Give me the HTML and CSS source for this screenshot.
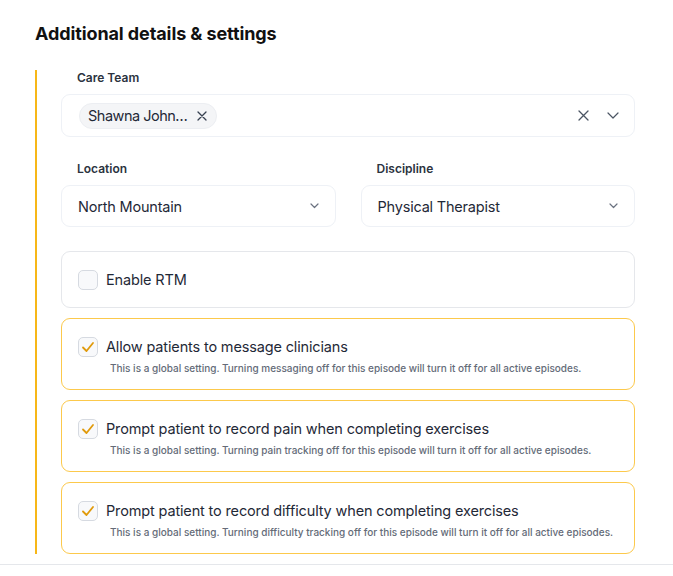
FILE: index.html
```html
<!DOCTYPE html>
<html>
<head>
<meta charset="utf-8">
<link rel="stylesheet" href="styles.css">
</head>
<body>
<div class="page">
  <h2 class="title">Additional details &amp; settings</h2>
  <div class="section">
    <div class="field">
      <label class="label">Care Team</label>
      <div class="multi">
        <span class="chip">Shawna John…
          <svg class="chip-x" width="10" height="10" viewBox="0 0 10 10"><path d="M1 1L9 9M9 1L1 9" stroke="#374151" stroke-width="1.3" stroke-linecap="round"/></svg>
        </span>
        <span class="spacer"></span>
        <svg class="clear" width="11" height="11" viewBox="0 0 11 11"><path d="M1 1L10 10M10 1L1 10" stroke="#4b5563" stroke-width="1.3" stroke-linecap="round"/></svg>
        <svg class="chev" width="12" height="7" viewBox="0 0 12 7"><path d="M1 1L6 6L11 1" fill="none" stroke="#4b5563" stroke-width="1.2" stroke-linecap="round" stroke-linejoin="round"/></svg>
      </div>
    </div>
    <div class="row">
      <div class="field">
        <label class="label">Location</label>
        <div class="select">
          <span class="value">North Mountain</span>
          <svg class="chev-sm" width="9" height="6" viewBox="0 0 9 6"><path d="M1 1L4.5 4.5L8 1" fill="none" stroke="#6b7280" stroke-width="1.2" stroke-linecap="round" stroke-linejoin="round"/></svg>
        </div>
      </div>
      <div class="field">
        <label class="label">Discipline</label>
        <div class="select">
          <span class="value">Physical Therapist</span>
          <svg class="chev-sm" width="9" height="6" viewBox="0 0 9 6"><path d="M1 1L4.5 4.5L8 1" fill="none" stroke="#6b7280" stroke-width="1.2" stroke-linecap="round" stroke-linejoin="round"/></svg>
        </div>
      </div>
    </div>
    <div class="options">
      <div class="rtm">
        <span class="box"></span>
        <span class="opt-title">Enable RTM</span>
      </div>
      <div class="card">
        <div class="card-head">
          <span class="box checked"><svg width="14" height="12" viewBox="0 0 14 12"><path d="M2 6.5L5.5 10L12 2" fill="none" stroke="#e09a0b" stroke-width="1.8" stroke-linecap="round" stroke-linejoin="round"/></svg></span>
          <span class="opt-title">Allow patients to message clinicians</span>
        </div>
        <p class="desc">This is a global setting. Turning messaging off for this episode will turn it off for all active episodes.</p>
      </div>
      <div class="card">
        <div class="card-head">
          <span class="box checked"><svg width="14" height="12" viewBox="0 0 14 12"><path d="M2 6.5L5.5 10L12 2" fill="none" stroke="#e09a0b" stroke-width="1.8" stroke-linecap="round" stroke-linejoin="round"/></svg></span>
          <span class="opt-title">Prompt patient to record pain when completing exercises</span>
        </div>
        <p class="desc">This is a global setting. Turning pain tracking off for this episode will turn it off for all active episodes.</p>
      </div>
      <div class="card">
        <div class="card-head">
          <span class="box checked"><svg width="14" height="12" viewBox="0 0 14 12"><path d="M2 6.5L5.5 10L12 2" fill="none" stroke="#e09a0b" stroke-width="1.8" stroke-linecap="round" stroke-linejoin="round"/></svg></span>
          <span class="opt-title">Prompt patient to record difficulty when completing exercises</span>
        </div>
        <p class="desc">This is a global setting. Turning difficulty tracking off for this episode will turn it off for all active episodes.</p>
      </div>
    </div>
  </div>
  <div class="divider"></div>
</div>
</body>
</html>
```
FILE: styles.css
```css
* { box-sizing: border-box; }
html, body { margin: 0; padding: 0; background: #fff; }
body { font-family: Inter, "Noto Sans", sans-serif; color: #1f2937; }
.page { padding: 22px 0 0 0; }
.title {
  margin: 0 0 24px 35px;
  font-size: 18px;
  line-height: 24px;
  font-weight: 700;
  color: #111111;
  letter-spacing: -0.1px;
}
.section {
  margin-left: 35px;
  margin-right: 38px;
  border-left: 2px solid #f7b718;
  padding-left: 24px;
  display: flex;
  flex-direction: column;
  gap: 24px;
}
.field { display: flex; flex-direction: column; gap: 8px; }
.label {
  font-size: 12px;
  line-height: 16px;
  font-weight: 600;
  color: #2b3340;
  padding-left: 16px;
}
.multi {
  height: 43px;
  border: 1px solid #eef1f6;
  border-radius: 9px;
  display: flex;
  align-items: center;
  padding: 0 15px 0 17px;
}
.chip {
  display: inline-flex;
  align-items: center;
  gap: 10px;
  height: 26px;
  padding: 0 9px 0 8px;
  background: #f4f5f7;
  border: 1px solid #eceef2;
  border-radius: 13px;
  font-size: 14.5px;
  letter-spacing: -0.5px;
  color: #1f2937;
}
.chip-x { margin-top: 1px; }
.spacer { flex: 1; }
.clear { margin-right: 18px; }
.row { display: grid; grid-template-columns: 1fr 1fr; gap: 25px; }
.select {
  height: 42px;
  border: 1px solid #eef1f6;
  border-radius: 9px;
  display: flex;
  align-items: center;
  justify-content: space-between;
  padding: 0 16px 0 16px;
}
.value { font-size: 14.5px; letter-spacing: -0.2px; color: #1f2937; }
.options { display: flex; flex-direction: column; gap: 10px; }
.rtm {
  height: 57px;
  border: 1px solid #e5e7eb;
  border-radius: 9px;
  display: flex;
  align-items: center;
  gap: 8px;
  padding-left: 16px;
}
.box {
  width: 20px;
  height: 20px;
  border: 1px solid #d6dae1;
  border-radius: 5px;
  background: #f8f9fb;
  display: inline-flex;
  align-items: center;
  justify-content: center;
  flex: none;
}
.opt-title { font-size: 14.5px; letter-spacing: -0.15px; color: #1f2937; line-height: 20px; }
.card {
  height: 72px;
  border: 1px solid #fcc94c;
  border-radius: 9px;
  padding: 18px 8px 0 16px;
}
.card-head { display: flex; align-items: center; gap: 8px; }
.desc {
  margin: 4px 0 0 32px;
  font-size: 10px;
  line-height: 14px;
  color: #646b78;
  font-weight: 500;
  white-space: nowrap;
}
.divider { margin-top: 10px; height: 1px; background: #e5e7eb; }
```
